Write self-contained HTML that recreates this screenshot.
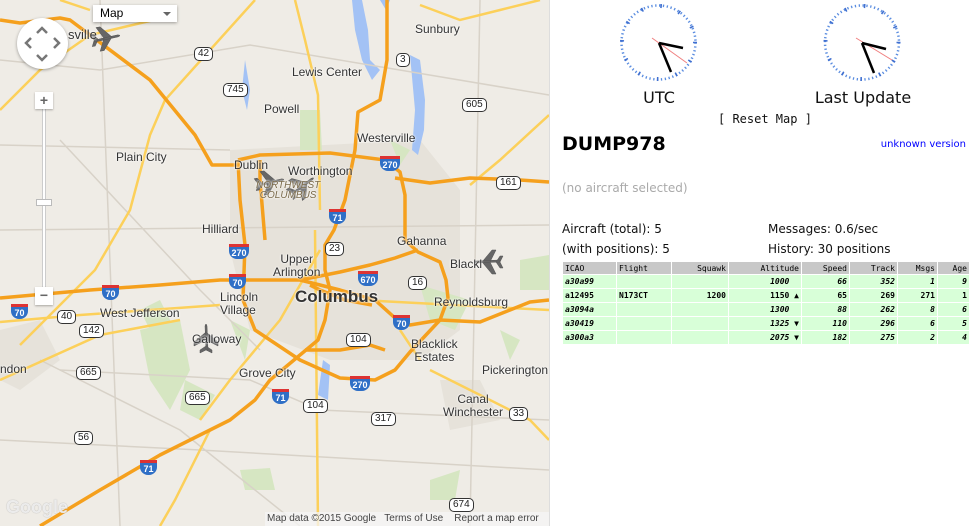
<!DOCTYPE html>
<html><head><meta charset="utf-8"><style>
*{margin:0;padding:0;box-sizing:border-box}
body{width:970px;height:526px;overflow:hidden;background:#fff;font-family:"DejaVu Sans","Liberation Sans",sans-serif;position:relative}
#map{position:absolute;left:0;top:0;width:549px;height:526px;overflow:hidden;background:#efece6}
.lbl{position:absolute;font-family:"Liberation Sans",sans-serif;font-size:12px;color:#333;white-space:nowrap;text-shadow:0 0 2px #fff,0 0 2px #fff}
.us{position:absolute;background:#fff;border:1px solid #333;border-radius:5px;font:10px "Liberation Sans",sans-serif;color:#222;padding:0 3px;line-height:12px}
.i{position:absolute;width:17px;height:15px;background:#2f6fc6;border-top:3px solid #d33;border-radius:0 0 8px 8px;color:#fff;font:bold 9px "Liberation Sans",sans-serif;text-align:center;line-height:12px}
table{position:absolute;left:562px;top:261px;border-collapse:separate;border-spacing:1px;font:8px "DejaVu Sans Mono",monospace;width:408px}
th{background:#c8c8c8;font-weight:normal;height:12px;padding:0 2px;text-align:right}
td{background:#d8ffd8;height:13px;padding:0 2px;text-align:right;font-style:italic;font-weight:bold}
tr.n td{font-style:normal}
th:nth-child(1),th:nth-child(2),td:nth-child(1),td:nth-child(2){text-align:left}
</style></head><body>
<div id="map">
<svg width="549" height="526" style="position:absolute;left:0;top:0">
<g fill="#e6e2da">
<path d="M230 150 L420 140 L460 190 L460 330 L420 360 L330 360 L250 330 L230 250Z"/>
<path d="M0 330 L40 320 L60 360 L20 390 L0 380Z"/>
<path d="M440 380 L480 380 L500 420 L450 430Z"/>
</g>
<g fill="#d6e6c2">
<path d="M140 330 L180 320 L190 370 L170 410 L150 380Z"/>
<path d="M185 380 L215 395 L200 420 L180 410Z"/>
<path d="M300 110 L320 110 L322 150 L300 150Z"/>
<path d="M390 140 L410 150 L400 165Z"/>
<path d="M420 285 L470 300 L455 330 L430 320Z"/>
<path d="M500 330 L520 340 L510 360Z"/>
<path d="M230 320 L250 330 L245 360Z"/>
<path d="M430 480 L460 470 L455 500 L430 500Z"/>
<path d="M240 470 L270 468 L275 490 L245 490Z"/>
<path d="M520 260 L549 255 L549 290 L520 290Z"/>
<path d="M140 310 L160 300 L175 330 L150 330Z"/>
</g>
<g fill="#a3c2f5">
<path d="M352 0 L362 0 L368 30 L370 60 L380 70 L372 80 L362 60 L355 30Z"/>
<path d="M410 55 L420 60 L425 100 L424 130 L418 155 L412 150 L415 110Z"/>
<path d="M323 360 L330 365 L328 400 L318 395Z"/>
<path d="M245 60 L250 90 L247 110 L242 90Z"/>
<path d="M380 0 L390 0 L386 10Z"/>
</g>
<g fill="none" stroke="#d8d2c8" stroke-width="1.5">
<path d="M0 60 L100 70 L250 45 L549 95"/><path d="M60 140 L200 290 L260 350"/>
<path d="M0 145 L230 150"/><path d="M60 370 L250 380 L320 410 L549 420"/>
<path d="M0 440 L200 450 L549 470"/><path d="M100 0 L120 526"/>
<path d="M480 0 L470 526"/><path d="M0 230 L549 225"/>
<path d="M40 360 L180 430 L300 526"/>
</g>
<g fill="none" stroke="#fcd05a" stroke-width="2.5">
<path d="M0 110 L40 70 L90 35 L175 15"/>
<path d="M255 0 L165 100 L150 135 L130 210 L95 270 L20 345"/>
<path d="M60 0 L90 10"/>
<path d="M295 0 L305 40 L318 95 L320 210"/>
<path d="M315 230 L318 526"/>
<path d="M320 250 L280 320 L230 380 L200 420"/>
<path d="M420 5 L460 20 L500 10 L540 0"/>
<path d="M549 115 L500 160 L470 185"/>
<path d="M0 322 L80 315 L220 305"/>
<path d="M0 380 L100 335 L180 320"/>
<path d="M430 370 L480 395 L530 420 L549 440"/>
<path d="M360 300 L549 310"/>
<path d="M400 330 L420 360"/>
<path d="M160 526 L175 500 L210 430"/>
</g>
<g fill="none" stroke="#f5a01d" stroke-width="3.5" stroke-linejoin="round">
<path d="M0 20 L20 23 L60 18 L70 20 L90 35 L150 80 L195 135 L212 165 L240 165"/>
<path d="M238 160 L240 200 L245 245 L243 300 L255 330 L270 340 L300 360 L340 378 L375 380 L395 370 L410 352 L440 320 L448 298 L446 280 L440 262 L418 252 L405 240 L405 195 L400 172 L385 160 L330 153 L260 155 L238 160"/>
<path d="M387 0 L387 60 L380 100 L358 112 L355 150 L345 200 L334 230 L325 245 L325 270 L330 290 L325 320 L318 340 L300 355 L270 380 L255 400 L230 420 L160 455 L100 490 L40 526"/>
<path d="M0 298 L90 290 L160 285 L220 280 L300 280 L340 290 L375 300 L395 318 L410 325 L440 320 L480 322 L510 310 L530 302 L549 300"/>
<path d="M300 280 L340 272 L370 265 L395 258 L418 250"/>
<path d="M395 178 L430 183 L470 178 L520 180 L549 182"/>
<path d="M310 285 L320 290 L345 300 L372 305"/>
<path d="M305 350 L340 350 L370 345 L385 350"/>
<path d="M260 160 L260 180 L265 240"/>
</g>
<g fill="#666" stroke="#555" stroke-width="0.5">
<g transform="translate(106,38) rotate(-10)"><path d="M-12 0 L12 -1 Q16 0 12 1 L-12 2 Z M-2 0 L-8 -12 L-4 -12 L6 0 L-4 12 L-8 12 Z M-12 0 L-15 -6 L-12 -6 L-8 0 L-12 6 L-15 6Z"/></g>
<g transform="translate(270,182) rotate(-10)"><path d="M-12 0 L12 -1 Q16 0 12 1 L-12 2 Z M-2 0 L-8 -12 L-4 -12 L6 0 L-4 12 L-8 12 Z M-12 0 L-15 -6 L-12 -6 L-8 0 L-12 6 L-15 6Z"/></g>
<g transform="translate(302,186) rotate(-35)"><path d="M-12 0 L12 -1 Q16 0 12 1 L-12 2 Z M-2 0 L-8 -12 L-4 -12 L6 0 L-4 12 L-8 12 Z M-12 0 L-15 -6 L-12 -6 L-8 0 L-12 6 L-15 6Z"/></g>
<g transform="translate(488,262) rotate(180)"><path d="M-12 0 L12 -1 Q16 0 12 1 L-12 2 Z M-2 0 L-8 -12 L-4 -12 L6 0 L-4 12 L-8 12 Z M-12 0 L-15 -6 L-12 -6 L-8 0 L-12 6 L-15 6Z"/></g>
<g transform="translate(206,338) rotate(-90)"><path d="M-12 0 L12 -1 Q16 0 12 1 L-12 2 Z M-2 0 L-8 -12 L-4 -12 L6 0 L-4 12 L-8 12 Z M-12 0 L-15 -6 L-12 -6 L-8 0 L-12 6 L-15 6Z"/></g>
</g>
</svg>
<div class="lbl" style="left:68px;top:27px;font-size:13px">sville</div>
<div class="lbl" style="left:292px;top:65px">Lewis Center</div>
<div class="lbl" style="left:415px;top:22px">Sunbury</div>
<div class="lbl" style="left:264px;top:102px">Powell</div>
<div class="lbl" style="left:357px;top:131px">Westerville</div>
<div class="lbl" style="left:116px;top:150px">Plain City</div>
<div class="lbl" style="left:234px;top:158px">Dublin</div>
<div class="lbl" style="left:288px;top:164px">Worthington</div>
<div class="lbl" style="left:256px;top:181px;font-size:10px;font-style:italic;color:#7a6a4a;line-height:10px;text-align:center">NORTHWEST<br>COLUMBUS</div>
<div class="lbl" style="left:202px;top:222px">Hilliard</div>
<div class="lbl" style="left:397px;top:234px">Gahanna</div>
<div class="lbl" style="left:273px;top:253px;line-height:13px;text-align:center">Upper<br>Arlington</div>
<div class="lbl" style="left:450px;top:257px">Blackl</div>
<div class="lbl" style="left:295px;top:287px;font-size:17px;font-weight:bold">Columbus</div>
<div class="lbl" style="left:434px;top:295px">Reynoldsburg</div>
<div class="lbl" style="left:220px;top:291px;line-height:13px">Lincoln<br>Village</div>
<div class="lbl" style="left:100px;top:306px">West Jefferson</div>
<div class="lbl" style="left:192px;top:332px">Galloway</div>
<div class="lbl" style="left:411px;top:338px;line-height:13px;text-align:center">Blacklick<br>Estates</div>
<div class="lbl" style="left:482px;top:363px">Pickerington</div>
<div class="lbl" style="left:0px;top:362px">ndon</div>
<div class="lbl" style="left:239px;top:366px">Grove City</div>
<div class="lbl" style="left:443px;top:393px;line-height:13px;text-align:center">Canal<br>Winchester</div>
<div class="us" style="left:194px;top:47px">42</div>
<div class="us" style="left:223px;top:83px">745</div>
<div class="us" style="left:396px;top:53px">3</div>
<div class="us" style="left:462px;top:98px">605</div>
<div class="us" style="left:496px;top:176px">161</div>
<div class="us" style="left:325px;top:242px">23</div>
<div class="us" style="left:408px;top:276px">16</div>
<div class="us" style="left:57px;top:310px">40</div>
<div class="us" style="left:79px;top:324px">142</div>
<div class="us" style="left:76px;top:366px">665</div>
<div class="us" style="left:185px;top:391px">665</div>
<div class="us" style="left:346px;top:333px">104</div>
<div class="us" style="left:303px;top:399px">104</div>
<div class="us" style="left:371px;top:412px">317</div>
<div class="us" style="left:74px;top:431px">56</div>
<div class="us" style="left:449px;top:498px">674</div>
<div class="us" style="left:509px;top:407px">33</div>
<div class="i" style="left:380px;top:156px;width:20px">270</div>
<div class="i" style="left:229px;top:244px;width:20px">270</div>
<div class="i" style="left:350px;top:376px;width:20px">270</div>
<div class="i" style="left:329px;top:209px">71</div>
<div class="i" style="left:272px;top:389px">71</div>
<div class="i" style="left:140px;top:460px">71</div>
<div class="i" style="left:358px;top:271px;width:20px">670</div>
<div class="i" style="left:102px;top:285px">70</div>
<div class="i" style="left:11px;top:304px">70</div>
<div class="i" style="left:393px;top:315px">70</div>
<div class="i" style="left:229px;top:274px">70</div>
<div style="position:absolute;left:17px;top:18px;width:51px;height:51px;border-radius:50%;background:#fff;box-shadow:0 1px 3px rgba(0,0,0,.35)"></div>
<svg width="51" height="51" style="position:absolute;left:17px;top:18px" fill="none" stroke="#777" stroke-width="2.5"><path d="M20 15 L25 10 L30 15"/><path d="M20 37 L25 42 L30 37"/><path d="M14 20 L9 25 L14 30"/><path d="M37 20 L42 25 L37 30"/></svg>
<div style="position:absolute;left:42px;top:108px;width:4px;height:182px;background:#fff;border:1px solid #ccc"></div>
<div style="position:absolute;left:36px;top:199px;width:16px;height:7px;background:#fff;border:1px solid #bbb"></div>
<div style="position:absolute;left:35px;top:92px;width:18px;height:17px;background:#fff;box-shadow:0 1px 2px rgba(0,0,0,.3);font:bold 14px 'Liberation Sans';color:#666;text-align:center;line-height:17px">+</div>
<div style="position:absolute;left:35px;top:287px;width:18px;height:18px;background:#fff;box-shadow:0 1px 2px rgba(0,0,0,.3);font:bold 14px 'Liberation Sans';color:#666;text-align:center;line-height:17px">−</div>
<div style="position:absolute;left:93px;top:5px;width:84px;height:17px;background:#fff;box-shadow:0 1px 3px rgba(0,0,0,.35);font:12px 'Liberation Sans';color:#000;padding-left:7px;line-height:17px">Map<span style="position:absolute;right:6px;top:7px;border:4px solid transparent;border-top-color:#666;border-bottom:0"></span></div>
<div style="position:absolute;left:6px;top:497px;font:bold 18px 'Liberation Sans';color:rgba(255,255,255,.8);text-shadow:0 0 1px #999">Google</div>
<div style="position:absolute;left:265px;top:512px;width:284px;height:14px;background:rgba(245,245,245,.75);font:10px 'Liberation Sans';color:#444;line-height:14px;padding-left:2px;white-space:nowrap">Map data ©2015 Google &nbsp; Terms of Use &nbsp;&nbsp; Report a map error</div>
</div>
<div style="position:absolute;left:549px;top:0;width:1px;height:526px;background:#ddd"></div>
<svg width="970" height="110" style="position:absolute;left:0;top:0">
<g fill="none" stroke="#5b8de0" stroke-width="2.5" stroke-dasharray="1.3 2.58">
<circle cx="658.5" cy="42.5" r="37"/><circle cx="862" cy="42.5" r="37"/></g>
<g fill="none" stroke="#3f6fd0" stroke-width="4" stroke-dasharray="1.6 17.77">
<circle cx="658.5" cy="42.5" r="36.5" transform="rotate(-1.2 658.5 42.5)"/><circle cx="862" cy="42.5" r="36.5" transform="rotate(-1.2 862 42.5)"/></g>
<g stroke="#f08080" stroke-width="1"><line x1="652" y1="38" x2="687" y2="63"/><line x1="856" y1="38" x2="892" y2="60"/></g>
<g stroke="#000" stroke-width="2.5"><line x1="659" y1="43" x2="683" y2="48"/><line x1="659" y1="43" x2="671" y2="72"/><line x1="862" y1="43" x2="886" y2="49"/><line x1="862" y1="43" x2="874" y2="73"/></g>
</svg>
<div style="position:absolute;left:609px;top:88px;width:100px;text-align:center;font-size:16px;color:#111">UTC</div>
<div style="position:absolute;left:803px;top:88px;width:120px;text-align:center;font-size:16px;color:#111">Last Update</div>
<div style="position:absolute;left:718px;top:112px;font:12px 'DejaVu Sans Mono',monospace;color:#111">[ Reset Map ]</div>
<div style="position:absolute;left:562px;top:133px;font-weight:bold;font-size:19px;color:#000">DUMP978</div>
<div style="position:absolute;right:4px;top:139px;font-size:10px;color:#00f">unknown version</div>
<div style="position:absolute;left:562px;top:181px;font-size:12px;color:#aaa">(no aircraft selected)</div>
<div style="position:absolute;left:562px;top:219px;font-size:12px;line-height:20px;color:#111">Aircraft (total): 5<br>(with positions): 5</div>
<div style="position:absolute;left:768px;top:219px;font-size:12px;line-height:20px;color:#111">Messages: 0.6/sec<br>History: 30 positions</div>
<table>
<tr><th style="width:53px">ICAO</th><th style="width:54px">Flight</th><th style="width:56px">Squawk</th><th style="width:72px">Altitude</th><th style="width:47px">Speed</th><th style="width:47px">Track</th><th style="width:39px">Msgs</th><th>Age</th></tr>
<tr><td>a30a99</td><td></td><td></td><td>1000 &nbsp;</td><td>66</td><td>352</td><td>1</td><td>9</td></tr>
<tr class="n"><td>a12495</td><td>N173CT</td><td>1200</td><td>1150 ▲</td><td>65</td><td>269</td><td>271</td><td>1</td></tr>
<tr><td>a3094a</td><td></td><td></td><td>1300 &nbsp;</td><td>88</td><td>262</td><td>8</td><td>6</td></tr>
<tr><td>a30419</td><td></td><td></td><td>1325 ▼</td><td>110</td><td>296</td><td>6</td><td>5</td></tr>
<tr><td>a300a3</td><td></td><td></td><td>2075 ▼</td><td>182</td><td>275</td><td>2</td><td>4</td></tr>
</table>
</body></html>
